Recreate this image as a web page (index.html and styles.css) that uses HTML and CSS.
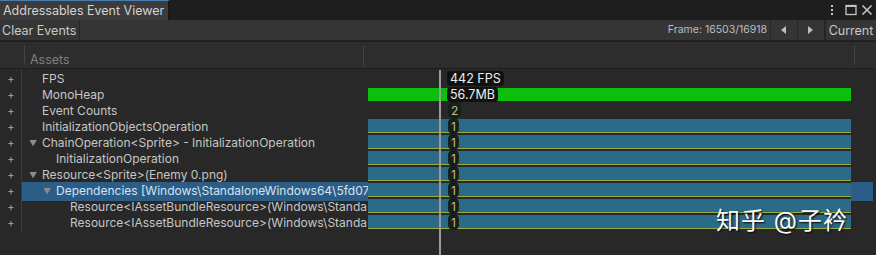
FILE: index.html
```html
<!DOCTYPE html>
<html lang="en">
<head>
  <meta charset="UTF-8" />
  <title>Addressables Event Viewer</title>
  <link rel="stylesheet" href="styles.css">
</head>
<body>
  <div class="window">
    <div class="tabbar">
      <div class="tab">Addressables Event Viewer</div>
      <div class="win-icons">
        <svg class="dots" width="4" height="12" viewBox="0 0 4 12"><rect x="1" y="1" width="2" height="2" fill="#c4c4c4"/><rect x="1" y="5" width="2" height="2" fill="#c4c4c4"/><rect x="1" y="9" width="2" height="2" fill="#c4c4c4"/></svg>
        <svg width="12" height="12" viewBox="0 0 12 12"><rect x="1" y="1.5" width="10" height="9" fill="none" stroke="#c4c4c4" stroke-width="1.3"/><rect x="1" y="1" width="10" height="2" fill="#c4c4c4"/></svg>
        <svg width="12" height="12" viewBox="0 0 12 12"><path d="M1.5 1.5 L10.5 10.5 M10.5 1.5 L1.5 10.5" stroke="#c4c4c4" stroke-width="1.6"/></svg>
      </div>
    </div>

    <div class="toolbar">
      <div class="tb-btn clear">Clear Events</div>
      <div class="spacer"></div>
      <div class="frame">Frame: 16503/16918</div>
      <div class="tb-btn arrow"><svg width="6" height="8" viewBox="0 0 6 8"><path d="M5 0 L0 4 L5 8 Z" fill="#bdbdbd"/></svg></div>
      <div class="tb-btn arrow"><svg width="6" height="8" viewBox="0 0 6 8"><path d="M0 0 L5 4 L0 8 Z" fill="#bdbdbd"/></svg></div>
      <div class="tb-btn current">Current</div>
    </div>

    <div class="view">
      <div class="header">
        <div class="hcell hplus"></div>
        <div class="hcell hname">Assets</div>
        <div class="hcell hgraph"></div>
        <div class="hcell htail"></div>
      </div>

      <div class="rows">
        <div class="row">
          <div class="plus">+</div>
          <div class="name lvl0">FPS</div>
          <div class="graph"><span class="val big">442 FPS</span></div>
          <div class="tail"></div>
        </div>
        <div class="row">
          <div class="plus">+</div>
          <div class="name lvl0">MonoHeap</div>
          <div class="graph"><div class="bar green"></div><span class="val big">56.7MB</span></div>
          <div class="tail"></div>
        </div>
        <div class="row">
          <div class="plus">+</div>
          <div class="name lvl0">Event Counts</div>
          <div class="graph"><span class="val count">2</span></div>
          <div class="tail"></div>
        </div>
        <div class="row">
          <div class="plus">+</div>
          <div class="name lvl0">InitializationObjectsOperation</div>
          <div class="graph"><div class="bar blue"></div><span class="val count">1</span></div>
          <div class="tail"></div>
        </div>
        <div class="row">
          <div class="plus">+</div>
          <div class="name lvl0"><span class="tri">&#9660;</span>ChainOperation&lt;Sprite&gt; - InitializationOperation</div>
          <div class="graph"><div class="bar blue"></div><span class="val count">1</span></div>
          <div class="tail"></div>
        </div>
        <div class="row">
          <div class="plus">+</div>
          <div class="name lvl1">InitializationOperation</div>
          <div class="graph"><div class="bar blue"></div><span class="val count">1</span></div>
          <div class="tail"></div>
        </div>
        <div class="row">
          <div class="plus">+</div>
          <div class="name lvl0"><span class="tri">&#9660;</span>Resource&lt;Sprite&gt;(Enemy 0.png)</div>
          <div class="graph"><div class="bar blue"></div><span class="val count">1</span></div>
          <div class="tail"></div>
        </div>
        <div class="row selected">
          <div class="plus">+</div>
          <div class="name lvl1"><span class="tri">&#9660;</span>Dependencies [Windows\StandaloneWindows64\5fd07</div>
          <div class="graph"><div class="bar blue"></div><span class="val count">1</span></div>
          <div class="tail"></div>
        </div>
        <div class="row">
          <div class="plus">+</div>
          <div class="name lvl2">Resource&lt;IAssetBundleResource&gt;(Windows\Standa</div>
          <div class="graph"><div class="bar blue"></div><span class="val count">1</span></div>
          <div class="tail"></div>
        </div>
        <div class="row">
          <div class="plus">+</div>
          <div class="name lvl2">Resource&lt;IAssetBundleResource&gt;(Windows\Standa</div>
          <div class="graph"><div class="bar blue"></div><span class="val count">1</span></div>
          <div class="tail"></div>
        </div>
      </div>

      <div class="cursor"></div>
      <div class="watermark">知乎 @子衿</div>
    </div>
  </div>
</body>
</html>
```

FILE: styles.css
```css
body {
  margin: 0;
  background-color: #282828;
  font-family: Inter, "Noto Sans CJK SC", sans-serif;
  font-size: 12px;
  color: #c4c4c4;
}
.window {
  width: 876px;
  height: 255px;
  overflow: hidden;
  background-color: #282828;
}

/* tab strip */
.tabbar {
  height: 20px;
  display: flex;
  align-items: stretch;
  background-color: #1e1e1e;
}
.tab {
  width: 165px;
  padding-left: 3px;
  background-color: #3c3c3c;
  border-top: 1px solid #4a7cb4;
  border-right: 2px solid #191919;
  line-height: 19px;
  color: #d2d2d2;
  font-size: 12.5px;
}
.win-icons {
  margin-left: auto;
  display: flex;
  align-items: center;
  gap: 4px;
  padding-right: 3px;
}
.win-icons .dots {
  margin-right: 7px;
}

/* toolbar */
.toolbar {
  height: 20px;
  display: flex;
  align-items: stretch;
  background-color: #353535;
  border-bottom: 1px solid #222;
}
.tb-btn {
  display: flex;
  align-items: center;
  justify-content: center;
  border-right: 1px solid #262626;
  color: #c8c8c8;
}
.tb-btn.clear {
  width: 77px;
  justify-content: flex-start;
  padding-left: 2px;
  font-size: 12.5px;
}
.spacer {
  flex: 1;
}
.frame {
  font-size: 10.5px;
  line-height: 20px;
  padding-right: 3px;
  color: #bdbdbd;
  border-right: 1px solid #262626;
}
.tb-btn.arrow {
  width: 26px;
}
.tb-btn.current {
  width: 50px;
  border-right: none;
  border-left: 1px solid #262626;
  font-size: 12.5px;
}

/* tree view */
.view {
  position: relative;
  height: 214px;
  border-top: 1px solid #1d1d1d;
}
.header {
  height: 26px;
  display: flex;
  background-color: #2d2d2d;
  border-bottom: 1px solid #1f1f1f;
  margin-bottom: 1px;
}
.hcell {
  margin: 3px 0 3px;
}
.hplus {
  width: 24px;
  border-right: 1px solid #444;
}
.hname {
  width: 333px;
  padding-left: 5px;
  border-right: 1px solid #444;
  color: #7e7e7e;
  line-height: 22px;
  padding-top: 4px;
  height: 18px;
  overflow: hidden;
  font-size: 12.5px;
}
.hgraph {
  width: 490px;
  border-right: 1px solid #444;
}
.htail {
  flex: 1;
}

.rows {
  display: flex;
  flex-direction: column;
}
.row {
  display: grid;
  grid-template-columns: 22px 346px 483px 25px;
  height: 16px;
}
.plus {
  border-right: 1px solid #3d3d3d;
  text-align: center;
  color: #a8a8a8;
  font-size: 11px;
  line-height: 19px;
  padding-left: 1px;
}
.name {
  position: relative;
  white-space: nowrap;
  overflow: hidden;
  line-height: 16px;
  padding-top: 1px;
  color: #c6c6c6;
}
.lvl0 {
  padding-left: 20px;
}
.lvl1 {
  padding-left: 34px;
}
.lvl2 {
  padding-left: 48px;
}
.tri {
  position: absolute;
  margin-left: -13px;
  font-size: 8px;
  color: #8c8c8c;
  line-height: 16px;
}
.graph {
  position: relative;
}
.bar {
  position: absolute;
  left: 0;
  right: 0;
}
.bar.green {
  top: 2px;
  height: 13px;
  background-color: #0cbf0c;
}
.bar.blue {
  top: 1px;
  height: 13px;
  background-color: #2b6b88;
  border-bottom: 1px solid #95ad43;
}
.row.selected .name,
.row.selected .tail {
  background-color: #2c5d87;
}
.row.selected .tail {
  margin-right: 3px;
}
.row.selected .name {
  color: #d6e3f0;
}
.val {
  position: absolute;
  left: 80px;
  top: 1px;
  height: 15px;
  line-height: 15px;
  border-radius: 4px;
  background-color: #111;
}
.val.big {
  padding: 0 3px;
  color: #ececec;
  font-size: 12.5px;
  left: 79px;
}
.val.count {
  padding: 0 3px;
  top: 0;
  height: 16px;
  line-height: 17px;
  border-radius: 5px;
  background-color: #12201f;
  color: #c9b97a;
}

.cursor {
  position: absolute;
  left: 439px;
  top: 28px;
  bottom: 0;
  width: 2px;
  background-color: #9a9a9a;
}
.watermark {
  position: absolute;
  left: 716px;
  top: 159px;
  font-size: 24px;
  color: #fafafa;
  text-shadow: 1px 1px 2px #000;
  letter-spacing: 1px;
}
```
